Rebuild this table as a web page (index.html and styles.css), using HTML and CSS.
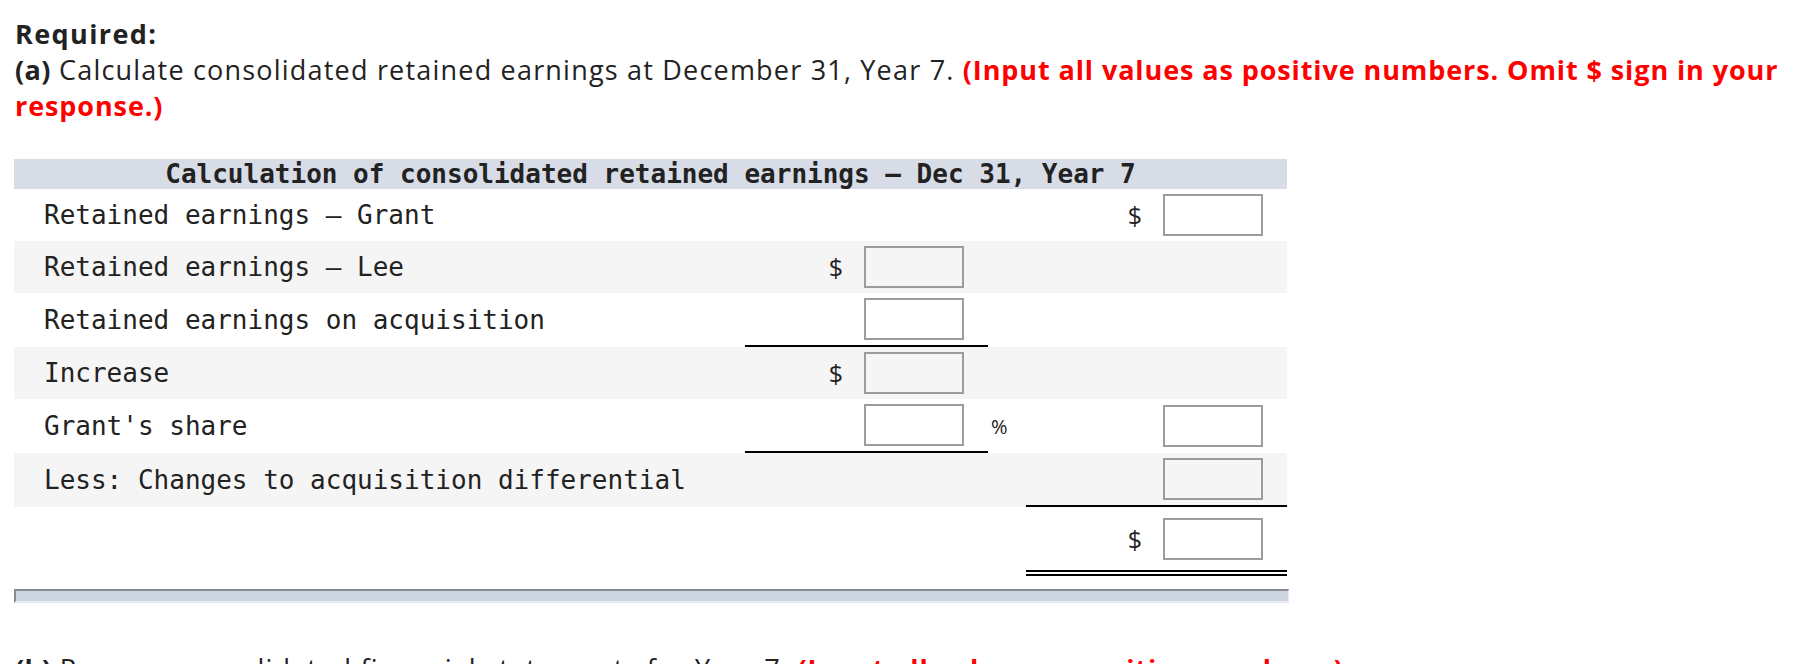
FILE: index.html
```html
<!DOCTYPE html>
<html lang="en">
<head>
<meta charset="utf-8">
<title>Consolidated retained earnings</title>
<link rel="stylesheet" href="styles.css">
</head>
<body>
<div class="page">
  <p class="req"><strong>Required:</strong><br><strong class="tag">(a)</strong> Calculate consolidated retained earnings at December 31, Year 7. <span class="note">(Input all values as positive numbers. Omit $ sign in your response.)</span></p>

  <table class="calc">
    <colgroup>
      <col class="w-lbl"><col class="w-c1"><col class="w-pc"><col class="w-c2">
    </colgroup>
    <thead>
      <tr><th colspan="4">Calculation of consolidated retained earnings — Dec 31, Year 7</th></tr>
    </thead>
    <tbody>
      <tr>
        <td class="lbl">Retained earnings — Grant</td>
        <td></td><td></td>
        <td><div class="amt"><span class="cur">$</span><input class="box" type="text"></div></td>
      </tr>
      <tr class="alt">
        <td class="lbl">Retained earnings — Lee</td>
        <td><div class="amt"><span class="cur">$</span><input class="box" type="text"></div></td>
        <td></td><td></td>
      </tr>
      <tr>
        <td class="lbl">Retained earnings on acquisition</td>
        <td class="rule"><div class="amt"><input class="box" type="text"></div></td>
        <td></td><td></td>
      </tr>
      <tr class="alt">
        <td class="lbl">Increase</td>
        <td><div class="amt"><span class="cur">$</span><input class="box" type="text"></div></td>
        <td></td><td></td>
      </tr>
      <tr>
        <td class="lbl">Grant's share</td>
        <td class="rule"><div class="amt"><input class="box" type="text"></div></td>
        <td class="pc">%</td>
        <td><div class="amt"><input class="box" type="text"></div></td>
      </tr>
      <tr class="alt">
        <td class="lbl">Less: Changes to acquisition differential</td>
        <td></td><td></td>
        <td class="rule"><div class="amt"><input class="box" type="text"></div></td>
      </tr>
      <tr class="total">
        <td class="lbl"></td>
        <td></td><td></td>
        <td class="dbl"><div class="amt"><span class="cur">$</span><input class="box" type="text"></div></td>
      </tr>
    </tbody>
  </table>

  <div class="bar"></div>

  <p class="req part-b"><strong class="tag">(b)</strong> Prepare consolidated financial statements for Year 7. <span class="note">(Input all values as positive numbers.)</span></p>
</div>
</body>
</html>
```

FILE: styles.css
```css
html, body {
  margin: 0;
  padding: 0;
  background: #ffffff;
}

.page {
  padding: 16px 14px 0 15px;
  font-family: "Open Sans", "Lato", sans-serif;
  color: #222222;
}

.req {
  margin: 0;
  font-size: 27px;
  line-height: 36px;
  letter-spacing: 1.2px;
}

.req strong {
  font-weight: 700;
  letter-spacing: 1.4px;
}

.req strong.tag {
  letter-spacing: 0.4px;
}

.note {
  color: #ff0000;
  font-weight: 700;
  letter-spacing: 0.9px;
}

.calc {
  margin-top: 35px;
  margin-left: -1px;
  border-collapse: separate;
  border-spacing: 0;
  table-layout: fixed;
  width: 1273px;
  font-family: "DejaVu Sans Mono", "Liberation Mono", monospace;
  font-size: 26px;
  color: #222222;
}

.w-lbl { width: 731px; }
.w-c1 { width: 243px; }
.w-pc { width: 38px; }
.w-c2 { width: 261px; }

.calc th {
  background: #d8dce6;
  font-weight: 700;
  text-align: center;
  height: 30px;
  padding: 0;
  line-height: 30px;
}

.calc td {
  height: 52px;
  padding: 0;
  vertical-align: middle;
}

.calc tr.alt td {
  background: #f5f5f5;
}

.calc tr.total td {
  height: 63px;
}

.lbl {
  padding-left: 30px !important;
  white-space: pre;
}

.rule {
  border-bottom: 2px solid #000000;
}

.dbl {
  border-bottom: 6px double #000000;
}

.amt {
  display: flex;
  justify-content: flex-end;
  align-items: center;
  gap: 21px;
  padding-right: 24px;
}

.cur {
  font-family: "Open Sans", "Lato", sans-serif;
  font-size: 25px;
  color: #222222;
}

.box {
  box-sizing: border-box;
  width: 100px;
  height: 42px;
  margin: 0;
  padding: 0;
  border: 2px solid #9c9c9c;
  background: transparent;
  font: inherit;
}

.pc {
  font-family: "Open Sans", "Lato", sans-serif;
  font-size: 20px;
  padding-left: 3px !important;
}

.bar {
  margin-top: 13px;
  margin-left: -1px;
  width: 1272px;
  height: 10px;
  box-sizing: content-box;
  background: #cdd5e1;
  border-top: 2px solid #878a90;
  border-left: 2px solid #878a90;
  border-bottom: 2px solid #e6edf7;
  border-right: 1px solid #e6edf7;
}

.part-b {
  margin-top: 48px;
}
```
